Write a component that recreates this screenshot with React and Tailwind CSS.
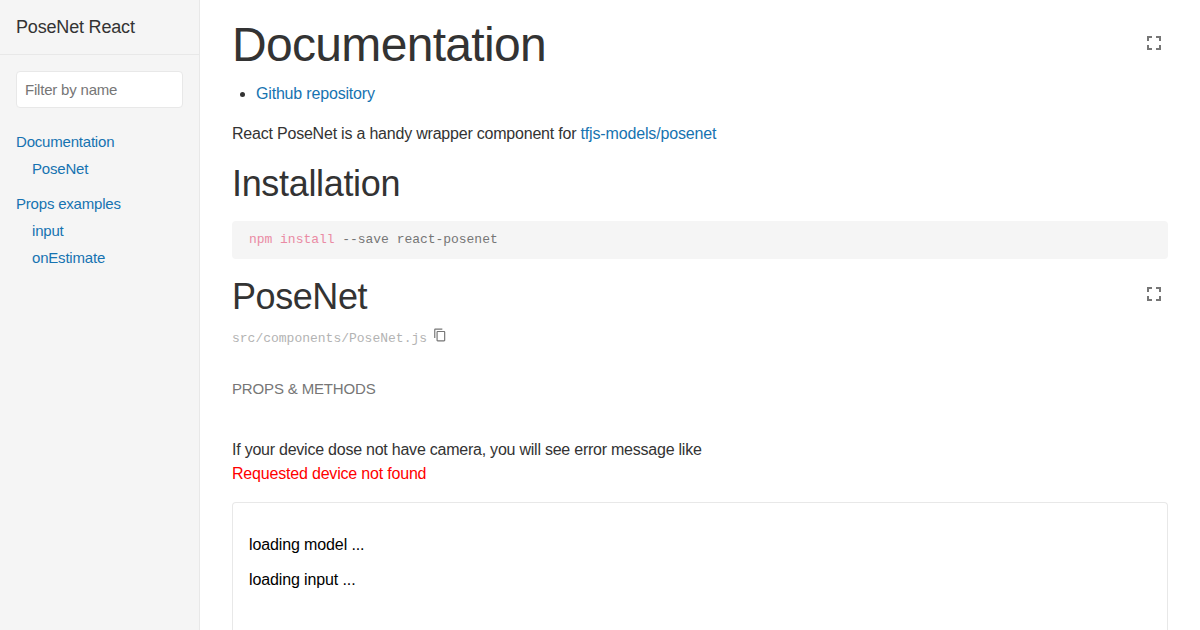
import React from "react";

const sans = "font-['Liberation_Sans',Arial,sans-serif]";
const mono = "font-['Liberation_Mono','Courier_New',monospace]";

function Fullscreen() {
  return (
    <svg width="24" height="24" viewBox="0 0 24 24" className="text-[#767676]" fill="currentColor">
      <path d="M7 14H5v5h5v-2H7v-3zm-2-4h2V7h3V5H5v5zm12 7h-3v2h5v-5h-2v3zM14 5v2h3v3h2V5h-5z" />
    </svg>
  );
}

function Copy() {
  return (
    <svg width="14" height="14" viewBox="0 0 24 24" className="text-[#767676]" fill="currentColor">
      <path d="M16 1H4c-1.1 0-2 .9-2 2v14h2V3h12V1zm3 4H8c-1.1 0-2 .9-2 2v14c0 1.1.9 2 2 2h11c1.1 0 2-.9 2-2V7c0-1.1-.9-2-2-2zm0 16H8V7h11v14z" />
    </svg>
  );
}

const link = "text-[#1673b1]";

export default function App() {
  return (
    <div className={`${sans} flex h-[630px] w-[1200px] overflow-hidden bg-white text-[16px] text-[#333]`}>
      <aside className="flex w-[200px] shrink-0 flex-col border-r border-[#e8e8e8] bg-[#f5f5f5]">
        <div className="h-[55px] border-b border-[#e8e8e8] px-4 pt-4 text-[18px] leading-[22px] tracking-[-0.18px] text-[#333]">PoseNet React</div>
        <div className="px-4 pt-4">
          <input
            placeholder="Filter by name"
            className="h-[37px] w-full rounded border border-[#e8e8e8] bg-white px-2 text-[15px] tracking-[-0.2px] text-[#333] outline-none placeholder:text-[#767676]"
          />
        </div>
        <nav className={`flex flex-col px-4 pt-[24px] text-[15px] leading-[17px] tracking-[-0.2px] ${link}`}>
          <a className="py-[1px]">Documentation</a>
          <a className="mt-[8px] py-[1px] pl-4">PoseNet</a>
          <a className="mt-[16px] py-[1px]">Props examples</a>
          <a className="mt-[8px] py-[1px] pl-4">input</a>
          <a className="mt-[8px] py-[1px] pl-4">onEstimate</a>
        </nav>
      </aside>
      <main className="flex min-w-0 flex-1 flex-col px-8 pt-[1px]">
        <div className="flex items-start justify-between">
          <h1 className="text-[48px] leading-[88px] font-normal tracking-[-0.68px] text-[#333]">Documentation</h1>
          <div className="mt-[30px] mr-[2px]"><Fullscreen /></div>
        </div>
        <ul className="ml-6 list-disc leading-[24px]">
          <li className="-mt-[7px] tracking-[-0.18px]"><a className={link}>Github repository</a></li>
        </ul>
        <p className="mt-4 leading-[24px] tracking-[-0.21px]">
          React PoseNet is a handy wrapper component for <a className={`${link} tracking-[-0.16px]`}>tfjs-models/posenet</a>
        </p>
        <h2 className="mt-[16px] text-[36px] leading-[44px] font-normal tracking-[-0.33px]">Installation</h2>
        <pre className={`${mono} mt-[15px] h-[38px] rounded bg-[#f5f5f5] pl-[17px] text-[13px] leading-[38px] tracking-[-0.03px] text-[#767676]`}>
          <span className="text-[#ea8ba4]">npm install</span> --save react-posenet
        </pre>
        <div className="mt-[16px] flex items-start justify-between">
          <h2 className="text-[36px] leading-[44px] font-normal tracking-[-0.43px]">PoseNet</h2>
          <div className="mt-[7px] mr-[2px]"><Fullscreen /></div>
        </div>
        <div className={`${mono} mt-[10px] flex items-start text-[13px] leading-[16px] text-[#b3b3b3]`}>
          <span className="mt-[2px]">src/components/PoseNet.js</span>
          <span className="ml-[6px] -mt-[1px]"><Copy /></span>
        </div>
        <div className="mt-[32px] text-[15px] leading-[20px] tracking-[-0.15px] text-[#767676]">PROPS &amp; METHODS</div>
        <p className="mt-[39px] leading-[24px] tracking-[-0.235px]">
          If your device dose not have camera, you will see error message like
          <br />
          <span className="tracking-[-0.19px] text-[#ff0000]">Requested device not found</span>
        </p>
        <div className="mt-[16px] flex-1 rounded-t border border-b-0 border-[#e8e8e8] px-4 pt-[30px] tracking-[-0.12px] text-black">
          <p className="leading-[24px]">loading model ...</p>
          <p className="mt-[11px] leading-[24px]">loading input ...</p>
        </div>
      </main>
    </div>
  );
}
